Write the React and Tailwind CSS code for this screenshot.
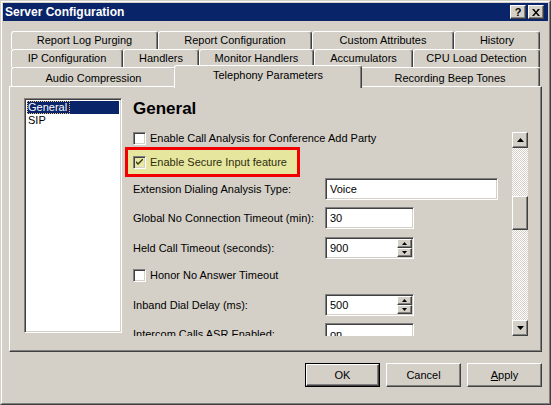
import React from "react";

// Win classic 3D edges
const raised =
  "border border-t-white border-l-white border-r-[#404040] border-b-[#404040] shadow-[inset_-1px_-1px_0_#808080]";
const sunken =
  "border border-t-[#808080] border-l-[#808080] border-r-white border-b-white shadow-[inset_1px_1px_0_#404040,inset_-1px_-1px_0_#d4d0c8]";

const UpArrow = ({ size = 7 }) => (
  <svg width={size} height={Math.ceil(size / 2)} viewBox="0 0 7 4">
    <polygon points="3.5,0 7,4 0,4" fill="#000" />
  </svg>
);

const DownArrow = ({ size = 7 }) => (
  <svg width={size} height={Math.ceil(size / 2)} viewBox="0 0 7 4">
    <polygon points="0,0 7,0 3.5,4" fill="#000" />
  </svg>
);

const Tab = ({ label, className }) => (
  <div
    className={`flex items-center justify-center rounded-t-[3px] border-l border-t border-r border-l-white border-t-white border-r-[#404040] shadow-[inset_-1px_0_0_#808080] bg-[#d4d0c8] ${className}`}
  >
    {label}
  </div>
);

const Checkbox = ({ checked, tinted }) => (
  <div
    className={`w-[13px] h-[13px] shrink-0 flex items-center justify-center ${sunken} ${
      tinted ? "bg-[#e8e8a6]" : "bg-white"
    }`}
  >
    {checked && (
      <svg width="7" height="7" viewBox="0 0 7 7">
        <path d="M0 2 L0 4 L2 6 L7 1 L7 -1 L2 4 Z" fill="#3a3a08" />
      </svg>
    )}
  </div>
);

// narrow = short numeric box, spin = with up/down buttons
const Field = ({ label, value, className, narrow, spin }) => (
  <div className={`flex items-center ${className}`}>
    <div className="w-[192px]">{label}</div>
    <div
      className={`h-[22px] bg-white flex items-center ${sunken} ${
        narrow || spin ? "w-[89px]" : "w-[173px]"
      }`}
    >
      <span className="flex-1 pl-[4px]">{value}</span>
      {spin && (
        <div className="flex flex-col mr-px">
          <div className={`w-[15px] h-[9px] bg-[#d4d0c8] flex items-center justify-center ${raised}`}>
            <UpArrow size={5} />
          </div>
          <div className={`w-[15px] h-[9px] bg-[#d4d0c8] flex items-center justify-center ${raised}`}>
            <DownArrow size={5} />
          </div>
        </div>
      )}
    </div>
  </div>
);

const App = () => {
  return (
    <div className="w-[551px] h-[405px] bg-[#d4d0c8] border border-t-[#d4d0c8] border-l-[#d4d0c8] border-r-[#404040] border-b-[#404040] font-['Liberation_Sans',Arial,sans-serif] text-[11px] text-black leading-none select-none">
      <div className="h-full border border-t-white border-l-white border-r-[#808080] border-b-[#808080] p-px flex flex-col">
        {/* Title bar */}
        <div className="h-[18px] shrink-0 bg-[#0a246a] flex items-center pl-[2px] pr-[4px]">
          <span className="flex-1 text-white font-bold text-[12px]">Server Configuration</span>
          <div className={`w-[16px] h-[14px] bg-[#d4d0c8] flex items-center justify-center font-bold text-[11px] ${raised}`}>
            ?
          </div>
          <div className={`w-[16px] h-[14px] ml-[2px] bg-[#d4d0c8] flex items-center justify-center ${raised}`}>
            <svg width="8" height="7" viewBox="0 0 8 7">
              <path d="M0 0 L2 0 L4 2.5 L6 0 L8 0 L5 3.5 L8 7 L6 7 L4 4.5 L2 7 L0 7 L3 3.5 Z" fill="#000" />
            </svg>
          </div>
        </div>

        {/* Tabs */}
        <div className="mt-[10px] ml-[8px] flex flex-col shrink-0">
          <div className="flex h-[18px]">
            <Tab label="Report Log Purging" className="w-[147px]" />
            <Tab label="Report Configuration" className="w-[154px]" />
            <Tab label="Custom Attributes" className="w-[142px]" />
            <Tab label="History" className="w-[86px]" />
          </div>
          <div className="flex h-[18px]">
            <Tab label="IP Configuration" className="w-[112px]" />
            <Tab label="Handlers" className="w-[76px]" />
            <Tab label="Monitor Handlers" className="w-[115px]" />
            <Tab label="Accumulators" className="w-[99px]" />
            <Tab label="CPU Load Detection" className="w-[127px]" />
          </div>
          <div className="flex h-[19px] items-end">
            <Tab label="Audio Compression" className="w-[165px] h-[19px] pt-[2px]" />
            <Tab
              label="Telephony Parameters"
              className="relative z-10 w-[188px] -mx-[2px] h-[23px] -mb-[2px] pb-[4px]"
            />
            <Tab label="Recording Beep Tones" className="w-[180px] h-[19px] pt-[2px]" />
          </div>
        </div>

        {/* Panel */}
        <div className="ml-[6px] w-[533px] h-[266px] shrink-0 border border-t-white border-l-white border-r-[#404040] border-b-[#404040] shadow-[inset_-1px_-1px_0_#808080] flex pl-[14px] pt-[11px]">
          {/* Category list */}
          <div className={`w-[98px] h-[235px] bg-white p-[2px] ${sunken}`}>
            <div className="h-[13px] bg-[#0a246a] text-white flex items-center px-px">
              <span className="outline-1 outline-dotted outline-[#f0c080] pr-[2px]">General</span>
            </div>
            <div className="h-[13px] flex items-center px-px">SIP</div>
          </div>

          {/* Settings */}
          <div className="ml-[3px] flex flex-col">
            <div className="pl-[8px] h-[20px] flex items-center text-[17px] font-bold">General</div>
            <div className="mt-[14px] h-[204px] flex">
              <div className="w-[387px] overflow-hidden">
                <div className="pl-[8px] h-[13px] flex items-center gap-[4px]">
                  <Checkbox />
                  <span>Enable Call Analysis for Conference Add Party</span>
                </div>
                <div className="mt-[2px] w-[175px] h-[30px] border-[3px] border-[#f20000] bg-[#e6e69e] flex items-center pl-[5px] gap-[4px] text-[#2e2e10]">
                  <Checkbox checked tinted />
                  <span>Enable Secure Input feature</span>
                </div>
                <div className="pl-[8px]">
                  <Field label="Extension Dialing Analysis Type:" value="Voice" className="mt-px" />
                  <Field label="Global No Connection Timeout (min):" value="30" className="mt-[7px]" narrow />
                  <Field label="Held Call Timeout (seconds):" value="900" className="mt-[8px]" spin />
                  <div className="mt-[10px] h-[13px] flex items-center gap-[4px]">
                    <Checkbox />
                    <span>Honor No Answer Timeout</span>
                  </div>
                  <Field label="Inband Dial Delay (ms):" value="500" className="mt-[12px]" spin />
                  <Field label="Intercom Calls ASR Enabled:" value="on" className="mt-[7px]" narrow />
                </div>
              </div>

              {/* Scrollbar */}
              <div className="w-[16px] flex flex-col bg-[repeating-conic-gradient(#ffffff_0%_25%,#d4d0c8_0%_50%)] bg-[length:2px_2px]">
                <div className={`h-[16px] shrink-0 bg-[#d4d0c8] flex items-center justify-center ${raised}`}>
                  <UpArrow />
                </div>
                <div className={`mt-[48px] h-[34px] shrink-0 bg-[#d4d0c8] ${raised}`} />
                <div className="flex-1" />
                <div className={`h-[16px] shrink-0 bg-[#d4d0c8] flex items-center justify-center ${raised}`}>
                  <DownArrow />
                </div>
              </div>
            </div>
          </div>
        </div>

        {/* Dialog buttons */}
        <div className="mt-[11px] flex justify-end gap-[6px] pr-[6px]">
          <div className="w-[75px] h-[24px] border border-black">
            <div className={`h-full bg-[#d4d0c8] flex items-center justify-center ${raised}`}>OK</div>
          </div>
          <div className={`w-[75px] h-[24px] bg-[#d4d0c8] flex items-center justify-center ${raised}`}>Cancel</div>
          <div className={`w-[75px] h-[24px] bg-[#d4d0c8] flex items-center justify-center ${raised}`}>
            <span>
              <span className="underline">A</span>pply
            </span>
          </div>
        </div>
      </div>
    </div>
  );
};

export default App;
